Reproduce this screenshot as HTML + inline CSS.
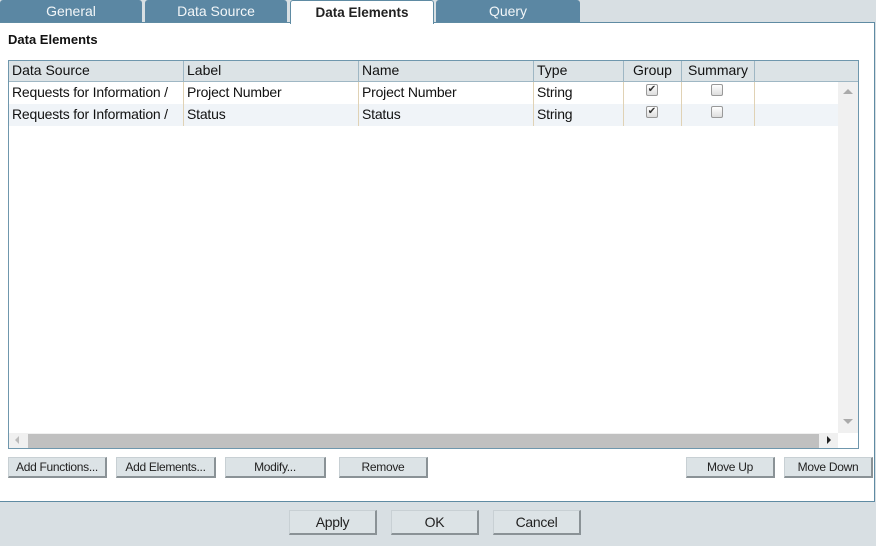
<!DOCTYPE html>
<html><head><style>
*{box-sizing:border-box;margin:0;padding:0}
body{width:876px;height:546px;background:#d8dfe3;font-family:"Liberation Sans",sans-serif;position:relative;overflow:hidden;font-size:14px;color:#111}
.a{position:absolute}
.tab{position:absolute;top:0;height:23px;background:#5b87a3;color:#f2f6f8;text-align:center;line-height:23px;font-size:14px;border-radius:3px 3px 0 0}
.tab.on{background:#fff;color:#222;font-weight:bold;border:1px solid #5f8ba3;border-bottom:none;font-size:13.5px}
.panel{left:0;top:22px;width:875px;height:480px;background:#fff;border:1px solid #5f8ba3;border-left:none}
.tbl{left:8px;top:60px;width:851px;height:389px;border:1px solid #6f97ad;background:#fff}
.hd{position:absolute;top:0;height:21px;background:#dce3e6;border-right:1px solid #9fb7c4;border-bottom:1px solid #9fb7c4;line-height:19px;padding-left:3px;font-size:14px}
.cell{position:absolute;height:22px;line-height:21px;padding-left:3px;border-right:1px solid #e0d2b5;font-size:14px;letter-spacing:-0.2px}
.btn{position:absolute;height:21px;background:#dce3e6;border:1px solid #c8d0d4;border-right:2px solid #8a9296;border-bottom:2px solid #8a9296;font-size:12px;text-align:center;line-height:18px;color:#222;letter-spacing:-0.3px}
.b2{height:25px;line-height:22px;font-size:14px}
.cb{position:absolute;width:12px;height:12px;border:1px solid #999;border-radius:2px;background:linear-gradient(#fff,#ddd);font-size:10px;line-height:10px;text-align:center;color:#333}
</style></head><body>
<div class="tab" style="left:0;width:142px">General</div>
<div class="tab" style="left:145px;width:142px">Data Source</div>
<div class="tab" style="left:436px;width:144px">Query</div>
<div class="a panel"></div>
<div class="tab on" style="left:290px;width:144px;height:24px;z-index:2">Data Elements</div>
<div class="a" style="left:8px;top:32px;font-weight:bold;font-size:13px">Data Elements</div>
<div class="a tbl">
<div class="hd" style="left:0;width:175px">Data Source</div>
<div class="hd" style="left:175px;width:175px">Label</div>
<div class="hd" style="left:350px;width:175px">Name</div>
<div class="hd" style="left:525px;width:90px">Type</div>
<div class="hd" style="left:615px;width:58px;text-align:center;padding:0">Group</div>
<div class="hd" style="left:673px;width:73px;text-align:center;padding:0">Summary</div>
<div class="hd" style="left:746px;width:103px;border-right:none"></div>
<div class="a" style="left:0;top:43px;width:830px;height:22px;background:#f0f4f8"></div>
<div class="cell" style="left:0;top:21px;width:175px">Requests for Information /</div>
<div class="cell" style="left:175px;top:21px;width:175px">Project Number</div>
<div class="cell" style="left:350px;top:21px;width:175px">Project Number</div>
<div class="cell" style="left:525px;top:21px;width:90px">String</div>
<div class="cell" style="left:615px;top:21px;width:58px"></div>
<div class="cell" style="left:673px;top:21px;width:73px"></div>
<div class="cell" style="left:0;top:43px;width:175px">Requests for Information /</div>
<div class="cell" style="left:175px;top:43px;width:175px">Status</div>
<div class="cell" style="left:350px;top:43px;width:175px">Status</div>
<div class="cell" style="left:525px;top:43px;width:90px">String</div>
<div class="cell" style="left:615px;top:43px;width:58px"></div>
<div class="cell" style="left:673px;top:43px;width:73px"></div>
<div class="cb" style="left:637px;top:23px">✔</div>
<div class="cb" style="left:702px;top:23px"></div>
<div class="cb" style="left:637px;top:45px">✔</div>
<div class="cb" style="left:702px;top:45px"></div>
<div class="a" style="left:829px;top:21px;width:20px;height:351px;background:#f0f0f0"></div>
<div class="a" style="left:834px;top:28px;width:0;height:0;border-left:5px solid transparent;border-right:5px solid transparent;border-bottom:5px solid #aaa"></div>
<div class="a" style="left:834px;top:358px;width:0;height:0;border-left:5px solid transparent;border-right:5px solid transparent;border-top:5px solid #aaa"></div>
<div class="a" style="left:0;top:372px;width:829px;height:15px;background:#f0f0f0"></div>
<div class="a" style="left:19px;top:373px;width:791px;height:14px;background:#c0c0c0"></div>
<div class="a" style="left:6px;top:375px;width:0;height:0;border-top:4px solid transparent;border-bottom:4px solid transparent;border-right:4px solid #bbb"></div>
<div class="a" style="left:818px;top:375px;width:0;height:0;border-top:4px solid transparent;border-bottom:4px solid transparent;border-left:4px solid #222"></div>
</div>
<div class="btn" style="left:8px;top:457px;width:99px">Add Functions...</div>
<div class="btn" style="left:116px;top:457px;width:100px">Add Elements...</div>
<div class="btn" style="left:225px;top:457px;width:101px">Modify...</div>
<div class="btn" style="left:339px;top:457px;width:89px">Remove</div>
<div class="btn" style="left:686px;top:457px;width:89px">Move Up</div>
<div class="btn" style="left:784px;top:457px;width:89px">Move Down</div>
<div class="btn b2" style="left:289px;top:510px;width:88px">Apply</div>
<div class="btn b2" style="left:391px;top:510px;width:88px">OK</div>
<div class="btn b2" style="left:493px;top:510px;width:88px">Cancel</div>
</body></html>
